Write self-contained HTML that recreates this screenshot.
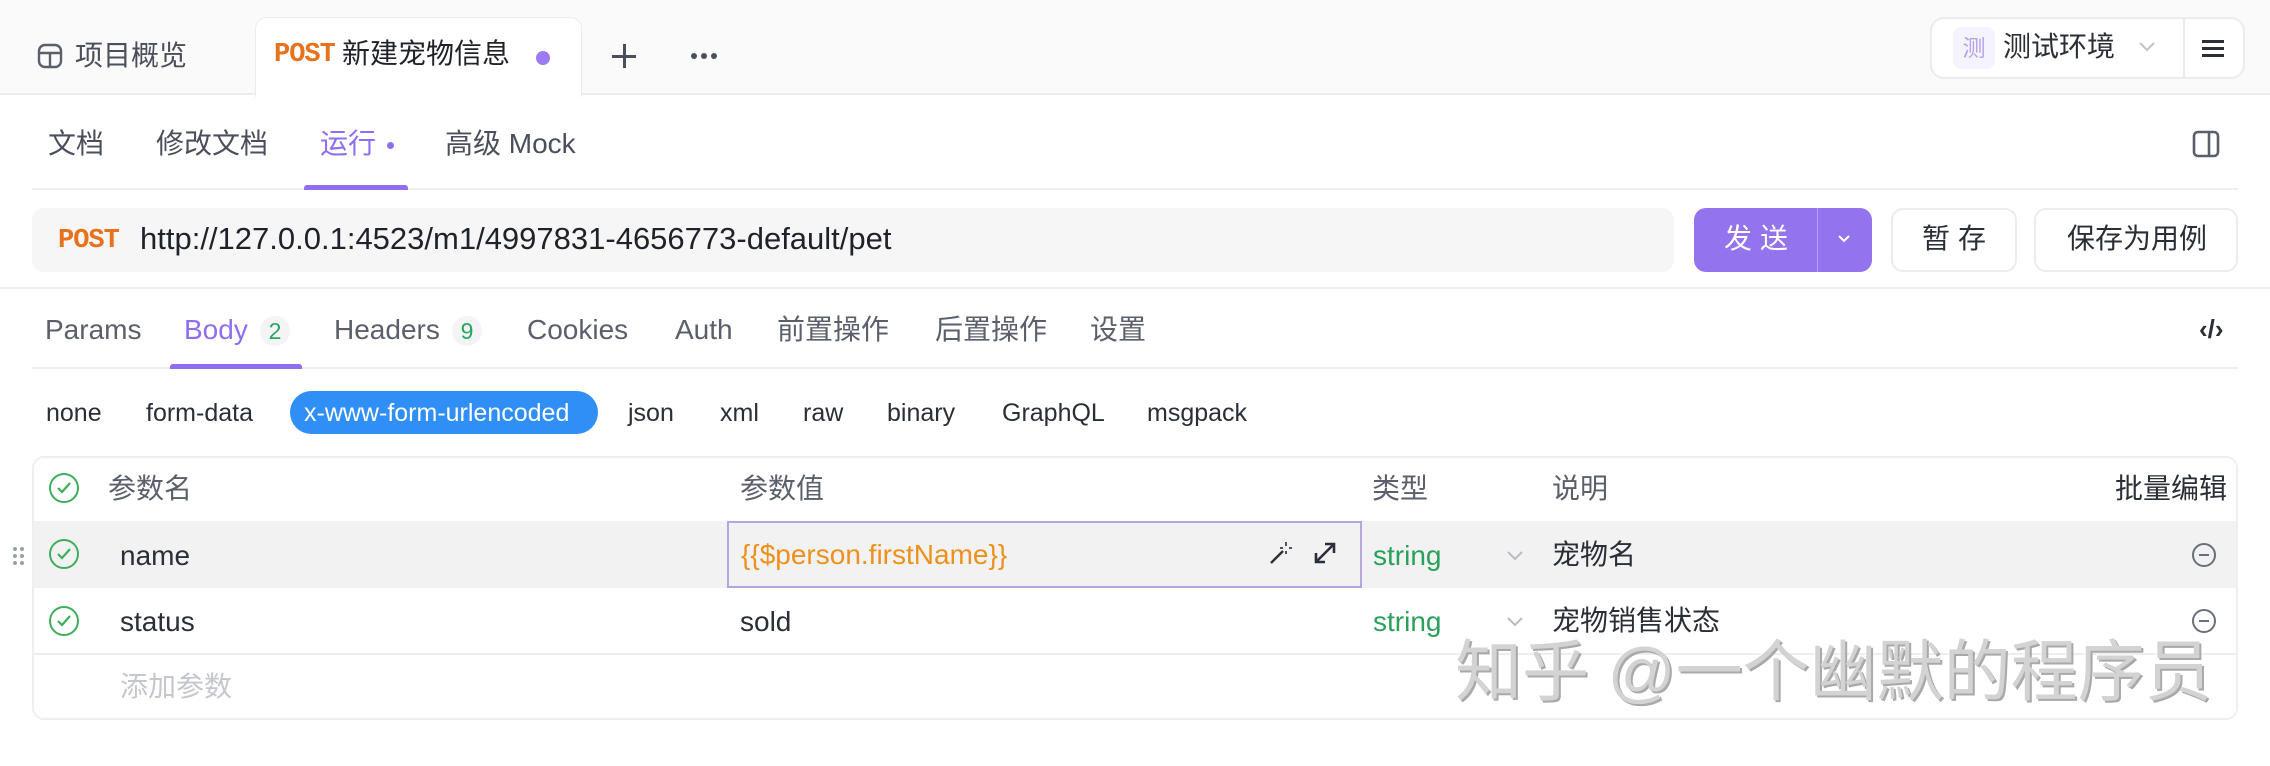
<!DOCTYPE html>
<html><head><meta charset="utf-8"><style>
*{margin:0;padding:0;box-sizing:border-box}
body{width:2270px;height:766px;background:#fff;position:relative;overflow:hidden;font-family:"Liberation Sans","Noto Sans CJK SC",sans-serif;color:#3a3f4b}
.a{position:absolute;white-space:nowrap}
.t{font-size:28px;line-height:32px}
.post{font-family:"Liberation Mono","Noto Sans CJK SC",monospace;font-weight:bold;color:#e8721c;letter-spacing:-1px}
.hl{position:absolute;height:2px;background:#eeeef0}
.chk{position:absolute;width:30px;height:30px;border:2px solid #3fae5a;border-radius:50%}
.chk svg{position:absolute;left:6px;top:7px}
.bt{top:398px;font-size:25px;line-height:30px;color:#2a2e36}
</style></head><body>
<div class="a" style="left:0;top:0;width:2270px;height:95px;background:#fafafb"></div>
<div class="hl" style="left:0;top:93px;width:2270px;background:#ececef"></div>
<svg class="a" style="left:37px;top:43px" width="26" height="26" viewBox="0 0 26 26"><rect x="2" y="2" width="22" height="22" rx="6" fill="none" stroke="#5a5f6b" stroke-width="2.4"/><line x1="2" y1="10" x2="24" y2="10" stroke="#5a5f6b" stroke-width="2.4"/><line x1="13" y1="10" x2="13" y2="24" stroke="#5a5f6b" stroke-width="2.4"/></svg>
<div class="a t" style="left:75px;top:40px;color:#4a4f5b">项目概览</div>
<div class="a" style="left:255px;top:17px;width:327px;height:80px;background:#fff;border:1px solid #ececef;border-bottom:none;border-radius:12px 12px 0 0"></div>
<div class="a t post" style="left:274px;top:39px;font-size:27px">POST</div>
<div class="a t" style="left:342px;top:38px;color:#1f2329">新建宠物信息</div>
<div class="a" style="left:536px;top:51px;width:14px;height:14px;border-radius:50%;background:#9c7cf0"></div>
<div class="a" style="left:612px;top:55px;width:24px;height:3px;background:#4a4f5b"></div>
<div class="a" style="left:623px;top:44px;width:3px;height:24px;background:#4a4f5b"></div>
<div class="a" style="left:691px;top:53px;width:6px;height:6px;border-radius:50%;background:#4a4f5b;box-shadow:10px 0 #4a4f5b,20px 0 #4a4f5b"></div>
<div class="a" style="left:1930px;top:17px;width:315px;height:62px;border:2px solid #ececef;border-radius:14px;background:#fff"></div>
<div class="a" style="left:2183px;top:19px;width:2px;height:58px;background:#ececef"></div>
<div class="a" style="left:1953px;top:27px;width:42px;height:42px;border-radius:8px;background:#f5f3fd;color:#b5a3ea;font-size:23px;text-align:center;line-height:42px">测</div>
<div class="a t" style="left:2003px;top:31px;color:#2a2e36">测试环境</div>
<svg class="a" style="left:2137px;top:40px" width="20" height="14"><polyline points="3,3 10,10 17,3" fill="none" stroke="#c0c3c9" stroke-width="2"/></svg>
<div class="a" style="left:2202px;top:40px;width:22px;height:3px;background:#2a2e36;box-shadow:0 7px #2a2e36,0 14px #2a2e36"></div>
<div class="a t" style="left:48px;top:128px;color:#4a4f5b">文档</div>
<div class="a t" style="left:156px;top:128px;color:#4a4f5b">修改文档</div>
<div class="a t" style="left:320px;top:128px;color:#8f6ff0">运行</div>
<div class="a" style="left:387px;top:142px;width:7px;height:7px;border-radius:50%;background:#8f6ff0"></div>
<div class="a t" style="left:445px;top:128px;color:#4a4f5b">高级 Mock</div>
<div class="hl" style="left:32px;top:188px;width:2206px"></div>
<div class="a" style="left:304px;top:185px;width:104px;height:5px;border-radius:3px 3px 0 0;background:#8f6ff0"></div>
<svg class="a" style="left:2192px;top:130px" width="28" height="28"><rect x="2" y="2" width="24" height="24" rx="4" fill="none" stroke="#5a5f6b" stroke-width="2.6"/><line x1="17" y1="2" x2="17" y2="26" stroke="#5a5f6b" stroke-width="2.6"/></svg>
<div class="a" style="left:32px;top:208px;width:1642px;height:64px;background:#f6f6f7;border-radius:12px"></div>
<div class="a t post" style="left:58px;top:225px;font-size:27px">POST</div>
<div class="a" style="left:140px;top:221px;font-size:31px;line-height:36px;color:#1f2329">http://127.0.0.1:4523/m1/4997831-4656773-default/pet</div>
<div class="a" style="left:1694px;top:208px;width:178px;height:64px;background:#9373ee;border-radius:12px"></div>
<div class="a" style="left:1817px;top:208px;width:1px;height:64px;background:#b7a3f5"></div>
<div class="a t" style="left:1724px;top:223px;color:#fff;letter-spacing:8px">发送</div>
<svg class="a" style="left:1836px;top:233px" width="16" height="12"><polyline points="3,3 8,8 13,3" fill="none" stroke="#fff" stroke-width="2"/></svg>
<div class="a" style="left:1891px;top:208px;width:126px;height:64px;border:2px solid #ececef;border-radius:12px"></div>
<div class="a t" style="left:1922px;top:223px;color:#2a2e36;letter-spacing:8px">暂存</div>
<div class="a" style="left:2034px;top:208px;width:204px;height:64px;border:2px solid #ececef;border-radius:12px"></div>
<div class="a t" style="left:2067px;top:223px;color:#2a2e36">保存为用例</div>
<div class="hl" style="left:0;top:287px;width:2270px"></div>
<div class="a t" style="left:45px;top:314px;color:#5a5f6b">Params</div>
<div class="a t" style="left:184px;top:314px;color:#8f6ff0">Body</div>
<div class="a" style="left:260px;top:316px;width:30px;height:30px;border-radius:50%;background:#f4f4f6;color:#2aa55e;font-size:23px;text-align:center;line-height:30px">2</div>
<div class="a t" style="left:334px;top:314px;color:#5a5f6b">Headers</div>
<div class="a" style="left:452px;top:316px;width:30px;height:30px;border-radius:50%;background:#f4f4f6;color:#2aa55e;font-size:23px;text-align:center;line-height:30px">9</div>
<div class="a t" style="left:527px;top:314px;color:#5a5f6b">Cookies</div>
<div class="a t" style="left:675px;top:314px;color:#5a5f6b">Auth</div>
<div class="a t" style="left:777px;top:314px;color:#5a5f6b">前置操作</div>
<div class="a t" style="left:935px;top:314px;color:#5a5f6b">后置操作</div>
<div class="a t" style="left:1090px;top:314px;color:#5a5f6b">设置</div>
<div class="hl" style="left:32px;top:367px;width:2206px"></div>
<div class="a" style="left:170px;top:364px;width:132px;height:5px;border-radius:3px 3px 0 0;background:#8f6ff0"></div>
<div class="a" style="left:2199px;top:314px;font-size:26px;color:#2a2e36;font-weight:bold">‹/›</div>
<div class="a" style="left:290px;top:391px;width:308px;height:43px;border-radius:22px;background:#2f8ff7"></div>
<div class="a bt" style="left:46px">none</div>
<div class="a bt" style="left:146px">form-data</div>
<div class="a bt" style="left:304px;color:#fff">x-www-form-urlencoded</div>
<div class="a bt" style="left:628px">json</div>
<div class="a bt" style="left:720px">xml</div>
<div class="a bt" style="left:803px">raw</div>
<div class="a bt" style="left:887px">binary</div>
<div class="a bt" style="left:1002px">GraphQL</div>
<div class="a bt" style="left:1147px">msgpack</div>
<div class="a" style="left:32px;top:456px;width:2206px;height:264px;border:2px solid #efeff1;border-radius:12px"></div>
<div class="a" style="left:34px;top:521px;width:2202px;height:67px;background:#f2f2f3"></div>
<div class="hl" style="left:34px;top:653px;width:2202px"></div>
<div class="chk" style="left:49px;top:473px"><svg width="14" height="12"><polyline points="1,6 5,10 13,1" fill="none" stroke="#3fae5a" stroke-width="2.2"/></svg></div>
<div class="chk" style="left:49px;top:539px"><svg width="14" height="12"><polyline points="1,6 5,10 13,1" fill="none" stroke="#3fae5a" stroke-width="2.2"/></svg></div>
<div class="chk" style="left:49px;top:606px"><svg width="14" height="12"><polyline points="1,6 5,10 13,1" fill="none" stroke="#3fae5a" stroke-width="2.2"/></svg></div>
<div class="a" style="left:13px;top:547px;width:4px;height:4px;border-radius:50%;background:#9aa0aa;box-shadow:7px 0 #9aa0aa,0 7px #9aa0aa,7px 7px #9aa0aa,0 14px #9aa0aa,7px 14px #9aa0aa"></div>
<div class="a t" style="left:108px;top:473px;color:#5a5f6b">参数名</div>
<div class="a t" style="left:740px;top:473px;color:#5a5f6b">参数值</div>
<div class="a t" style="left:1372px;top:473px;color:#5a5f6b">类型</div>
<div class="a t" style="left:1552px;top:473px;color:#5a5f6b">说明</div>
<div class="a t" style="right:43px;top:473px;color:#2a2e36">批量编辑</div>
<div class="a t" style="left:120px;top:540px;color:#2a2e36">name</div>
<div class="a" style="left:727px;top:521px;width:635px;height:67px;border:2px solid #b6a6e0;background:#f2f2f3"></div>
<div class="a t" style="left:741px;top:539px;color:#f0901c">{{$person.firstName}}</div>
<svg class="a" style="left:1268px;top:540px" width="26" height="26"><line x1="3" y1="23" x2="15" y2="11" stroke="#2a2e36" stroke-width="2.4"/><g stroke="#2a2e36" stroke-width="1.6"><line x1="18" y1="2" x2="18" y2="6"/><line x1="18" y1="11" x2="18" y2="14"/><line x1="12" y1="8" x2="15" y2="8"/><line x1="21" y1="8" x2="24" y2="8"/></g></svg>
<svg class="a" style="left:1313px;top:541px" width="24" height="24"><g fill="none" stroke="#2a2e36" stroke-width="2.6"><line x1="3" y1="21" x2="21" y2="3"/><polyline points="12,3 21,3 21,12"/><polyline points="3,12 3,21 12,21"/></g></svg>
<div class="a t" style="left:1373px;top:540px;color:#2aa05a">string</div>
<svg class="a" style="left:1505px;top:549px" width="20" height="14"><polyline points="3,3 10,10 17,3" fill="none" stroke="#b8bcc3" stroke-width="2"/></svg>
<div class="a t" style="left:1552px;top:539px;color:#2a2e36">宠物名</div>
<div class="a" style="left:2192px;top:543px;width:24px;height:24px;border:2px solid #6a6f7b;border-radius:50%"><div style="position:absolute;left:5px;top:9px;width:10px;height:2px;background:#6a6f7b"></div></div>
<div class="a t" style="left:120px;top:606px;color:#2a2e36">status</div>
<div class="a t" style="left:740px;top:606px;color:#2a2e36">sold</div>
<div class="a t" style="left:1373px;top:606px;color:#2aa05a">string</div>
<svg class="a" style="left:1505px;top:615px" width="20" height="14"><polyline points="3,3 10,10 17,3" fill="none" stroke="#b8bcc3" stroke-width="2"/></svg>
<div class="a t" style="left:1552px;top:605px;color:#2a2e36">宠物销售状态</div>
<div class="a" style="left:2192px;top:609px;width:24px;height:24px;border:2px solid #6a6f7b;border-radius:50%"><div style="position:absolute;left:5px;top:9px;width:10px;height:2px;background:#6a6f7b"></div></div>
<div class="a t" style="left:120px;top:671px;color:#c4c7cc">添加参数</div>
<div class="a" style="left:1455px;top:634px;font-size:67px;line-height:78px;color:#cfcfcf;text-shadow:2px 2px 0 #a0a0a0,-1px -1px 0 #fff;opacity:.9">知乎 @一个幽默的程序员</div>
</body></html>
